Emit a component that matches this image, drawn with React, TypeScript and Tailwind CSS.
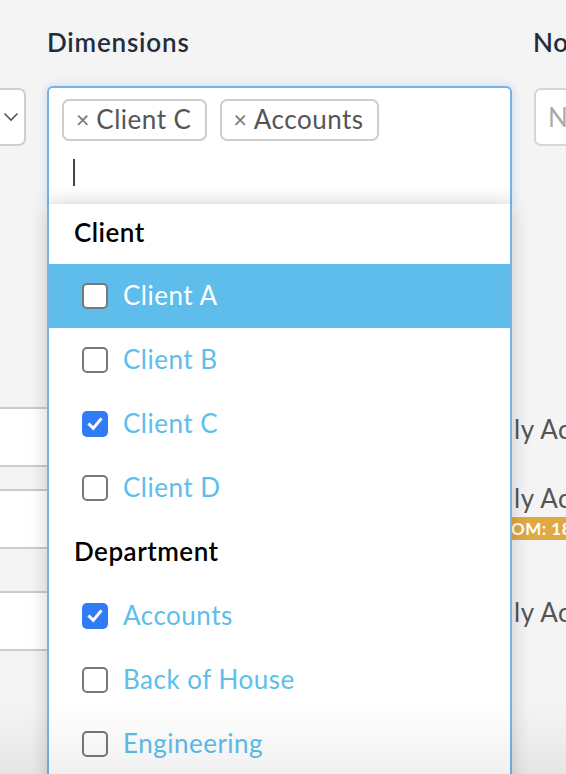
import React from "react";

const font = { fontFamily: "Lato, 'Open Sans', sans-serif" };

function Check({ checked }: { checked: boolean }) {
  if (checked) {
    return (
      <div className="w-[26px] h-[26px] rounded-[5px] bg-[#2f7cf6] flex items-center justify-center shrink-0">
        <svg width="20" height="20" viewBox="0 0 20 20" fill="none">
          <path d="M4.5 10.5 L8.3 14.2 L15.5 5.5" stroke="white" strokeWidth="3" strokeLinecap="square" />
        </svg>
      </div>
    );
  }
  return <div className="w-[26px] h-[26px] rounded-[5px] border-2 border-[#777] bg-white shrink-0" />;
}

function Option({ label, checked, highlighted }: { label: string; checked?: boolean; highlighted?: boolean }) {
  return (
    <div
      className={
        "h-[64px] flex items-center pl-[33px] gap-[15px] " +
        (highlighted ? "bg-[#5ebdeb]" : "bg-white")
      }
    >
      <Check checked={!!checked} />
      <span
        className={
          "text-[26px] tracking-[0.5px] leading-none pb-[2px] " + (highlighted ? "text-white" : "text-[#5cbeea]")
        }
      >
        {label}
      </span>
    </div>
  );
}

function Tag({ label }: { label: string }) {
  return (
    <div className="h-[42px] flex items-center border-2 border-[#cdcdcd] rounded-[7px] pl-[12px] pr-[13px] gap-[7px] bg-white">
      <span className="text-[23px] text-[#777] leading-none pb-[2px]">×</span>
      <span className="text-[26px] tracking-[0.5px] text-[#555] leading-none pb-[2px]">{label}</span>
    </div>
  );
}

function Row({ text }: { text: string }) {
  return (
    <div className="flex h-[30px] leading-[30px]">
      <span className="w-[94px] text-right">{text.slice(0, 5)}</span>
      <span className="ml-[5px]">{text.slice(5)}</span>
    </div>
  );
}

export default function App() {
  return (
    <div className="w-[566px] h-[774px] overflow-hidden relative bg-[#f4f4f4]" style={font}>
      {/* labels */}
      <div className="flex h-[86px] pt-[26px]">
        <div className="w-[47px] shrink-0" />
        <div className="w-[465px] shrink-0 text-[26px] tracking-[0.8px] font-semibold text-[#1f2d3d] leading-[32px]">
          Dimensions
        </div>
        <div className="w-[21px] shrink-0" />
        <div className="text-[26px] tracking-[0.8px] font-semibold text-[#1f2d3d] leading-[32px] whitespace-nowrap">
          Notes
        </div>
      </div>

      {/* controls */}
      <div className="flex items-start">
        <div className="ml-[-40px] w-[66px] h-[58px] mt-[2px] shrink-0 border-2 border-[#cfcfcf] rounded-[7px] bg-white flex items-center justify-end pr-[5px]">
          <svg width="16" height="10" viewBox="0 0 16 10" fill="none">
            <path d="M1.5 1.5 L8 8 L14.5 1.5" stroke="#555" strokeWidth="1.6" />
          </svg>
        </div>
        <div className="w-[21px] shrink-0" />
        <div className="relative w-[465px] shrink-0 z-10">
          <div className="bg-white border-2 border-b-0 border-[#78b0e8] rounded-t-[6px] shadow-[0_0_10px_rgba(110,165,230,0.35)]">
            <div className="flex gap-[13px] pl-[13px] pt-[11px]">
              <Tag label="Client C" />
              <Tag label="Accounts" />
            </div>
            <div className="h-[45px] pl-[24px] pt-[18px]">
              <div className="w-[2px] h-[28px] bg-[#444]" />
            </div>
            <div className="h-[18px] bg-gradient-to-b from-white to-[#f6f6f6]" />
          </div>
          <div className="absolute top-full left-0 w-full h-[640px] bg-white border-x-2 border-[#78b0e8] shadow-[0_4px_18px_rgba(0,0,0,0.18)]">
            <div className="h-[60px] flex items-center pl-[25px] pb-[4px] text-[26px] tracking-[0.5px] leading-none font-semibold text-black">
              Client
            </div>
            <Option label="Client A" highlighted />
            <Option label="Client B" />
            <Option label="Client C" checked />
            <Option label="Client D" />
            <div className="h-[64px] flex items-center pl-[25px] pb-[2px] text-[26px] tracking-[0.5px] leading-none font-semibold text-black">
              Department
            </div>
            <Option label="Accounts" checked />
            <Option label="Back of House" />
            <Option label="Engineering" />
          </div>
        </div>
        <div className="w-[22px] shrink-0" />
        <div className="w-[80px] h-[58px] mt-[2px] shrink-0 border-2 border-[#d6d6d6] rounded-[7px] bg-white flex items-center pl-[12px] text-[26px] text-[#aaa]">
          Notes
        </div>
      </div>

      {/* table behind the menu */}
      <div className="flex mt-[203px]">
        <div className="ml-[-40px] w-[100px] shrink-0 flex flex-col">
          <div className="h-[60px] bg-white border-y-2 border-[#cbcbcb]" />
          <div className="h-[22px]" />
          <div className="h-[60px] bg-white border-y-2 border-[#cbcbcb]" />
          <div className="h-[42px]" />
          <div className="h-[60px] bg-white border-y-2 border-[#cbcbcb]" />
        </div>
        <div className="ml-[355px] flex flex-col whitespace-nowrap text-[26px] tracking-[0.5px] text-[#555]">
          <div className="mt-[7px]"><Row text="Monthly Accrual" /></div>
          <div className="mt-[39px]"><Row text="Monthly Accrual" /></div>
          <div className="mt-[4px] h-[23px] flex text-white font-bold text-[17px] leading-[23px]">
            <span className="w-[100px]" />
            <span className="bg-[#e1a943] pl-[0px] pr-[60px] ml-[-4px]">OM: 18 Jan</span>
          </div>
          <div className="mt-[57px]"><Row text="Monthly Accrual" /></div>
        </div>
      </div>

      <div className="absolute left-0 right-0 bottom-0 h-[70px] bg-gradient-to-b from-transparent to-[rgba(0,0,0,0.06)] pointer-events-none z-20" />
    </div>
  );
}
